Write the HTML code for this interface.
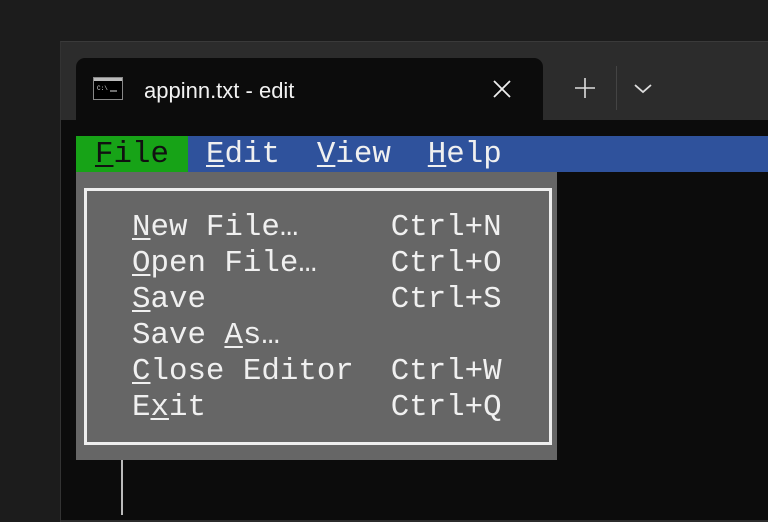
<!DOCTYPE html>
<html><head><style>
body{margin:0;width:768px;height:515px;overflow:hidden;background:#1c1c1c;position:relative;font-family:"Liberation Mono",monospace;}
.win{position:absolute;left:60px;top:41px;width:720px;height:480px;background:#2c2c2c;border-top:1px solid #3a3a3a;border-left:1px solid #333;}
.term{position:absolute;left:61px;top:120px;width:720px;height:400px;background:#0c0c0c;}
.tab{position:absolute;left:76px;top:58px;width:467px;height:64px;background:#0c0c0c;border-radius:9px 9px 0 0;}
.title{position:absolute;left:144px;top:78px;font-family:"Liberation Sans",sans-serif;font-size:22px;color:#f2f2f2;}
.t{position:absolute;font-size:30.8px;line-height:36px;color:#f0f0f0;white-space:pre;}
u{text-decoration:underline;text-decoration-thickness:2px;text-underline-offset:3px;}
</style></head><body>
<div class="win"></div>
<div class="term"></div>
<div class="tab"></div>
<svg style="position:absolute;left:93px;top:77px" width="30" height="24"><rect x="0.5" y="0.5" width="29" height="22" fill="#000" stroke="#888"/><rect x="1" y="1" width="28" height="3" fill="#bbb"/><text x="4" y="13" font-size="6" fill="#ddd" font-family="Liberation Mono">C:\</text><line x1="17" y1="14" x2="24" y2="14" stroke="#ddd"/></svg>
<div class="title">appinn.txt - edit</div>
<svg style="position:absolute;left:490px;top:77px" width="24" height="24"><path d="M4 4L20 20M20 4L4 20" stroke="#eee" stroke-width="1.8"/></svg>
<svg style="position:absolute;left:573px;top:76px" width="24" height="24"><path d="M12 2V22M2 12H22" stroke="#ddd" stroke-width="1.6"/></svg>
<div style="position:absolute;left:616px;top:66px;width:1px;height:44px;background:#444"></div>
<svg style="position:absolute;left:632px;top:80px" width="22" height="16"><path d="M3 5L11 12L19 5" stroke="#ddd" stroke-width="1.8" fill="none"/></svg>
<div style="position:absolute;left:76px;top:136px;width:700px;height:36px;background:#2f529c"></div>
<div style="position:absolute;left:76px;top:136px;width:112px;height:36px;background:#17a317"></div>
<div class="t" style="left:95px;top:137px;color:#111"><u>F</u>ile</div>
<div class="t" style="left:206px;top:137px"><u>E</u>dit  <u>V</u>iew  <u>H</u>elp</div>
<div style="position:absolute;left:76px;top:172px;width:481px;height:288px;background:#666"></div>
<div style="position:absolute;left:84px;top:188px;width:462px;height:251px;border:3px solid #eee"></div>
<div style="position:absolute;left:121px;top:460px;width:2px;height:55px;background:#bbb"></div>
<div class="t" style="left:132px;top:210px"><u>N</u>ew File…     Ctrl+N
<u>O</u>pen File…    Ctrl+O
<u>S</u>ave          Ctrl+S
Save <u>A</u>s…
<u>C</u>lose Editor  Ctrl+W
E<u>x</u>it          Ctrl+Q</div>
</body></html>
